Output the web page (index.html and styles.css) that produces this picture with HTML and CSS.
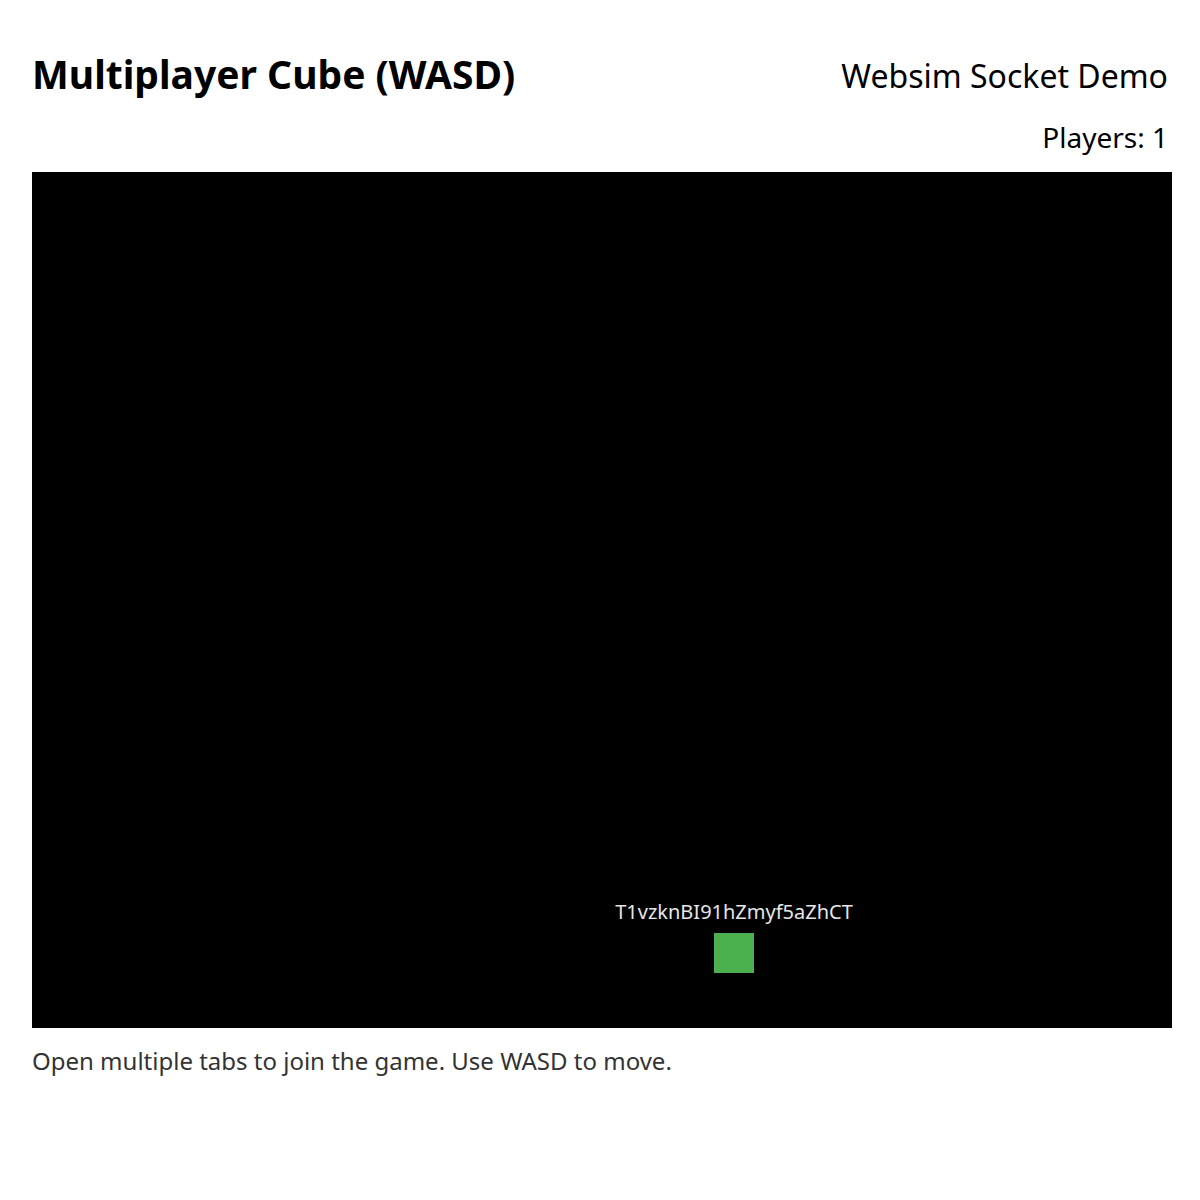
FILE: index.html
```html
<!DOCTYPE html>
<html lang="en">
<head>
<meta charset="utf-8">
<title>Multiplayer Cube (WASD)</title>
<link rel="stylesheet" href="styles.css">
</head>
<body>
<div class="page">
  <header class="header">
    <h1 class="title">Multiplayer Cube (WASD)</h1>
    <div class="meta">
      <div class="subtitle">Websim Socket Demo</div>
      <div class="players">Players: 1</div>
    </div>
  </header>
  <div class="stage">
    <div class="player" style="left: 650px; top: 728px;">
      <div class="player-name">T1vzknBI91hZmyf5aZhCT</div>
      <div class="player-cube"></div>
    </div>
  </div>
  <p class="hint">Open multiple tabs to join the game. Use WASD to move.</p>
</div>
</body>
</html>
```
FILE: styles.css
```css
html, body {
  margin: 0;
  padding: 0;
  background: #ffffff;
}
body {
  font-family: "Noto Sans", "Open Sans", sans-serif;
  color: #000;
}
.page {
  width: 1136px;
  padding: 32px;
}
.header {
  display: flex;
  justify-content: space-between;
  align-items: flex-start;
}
.title {
  margin: 0;
  font-size: 39px;
  font-weight: 700;
  line-height: 88px;
  margin-top: -2px;
}
.meta {
  display: flex;
  flex-direction: column;
  align-items: flex-end;
}
.subtitle {
  font-size: 32px;
  line-height: 40px;
  margin-top: 24px;
}
.players {
  font-size: 28px;
  line-height: 40px;
  margin-top: 21px;
}
.stage {
  position: relative;
  width: 1140px;
  height: 856px;
  background: #000;
  margin-top: 15px;
}
.player {
  position: absolute;
  width: 104px;
  display: flex;
  flex-direction: column;
  align-items: center;
}
.player-name {
  color: #e6e6e6;
  font-size: 20px;
  line-height: 24px;
  white-space: nowrap;
  margin-bottom: 9px;
}
.player-cube {
  width: 40px;
  height: 40px;
  background: #4caf50;
}
.hint {
  margin: 17px 0 0;
  font-size: 24px;
  line-height: 32px;
  color: #333;
}
```
